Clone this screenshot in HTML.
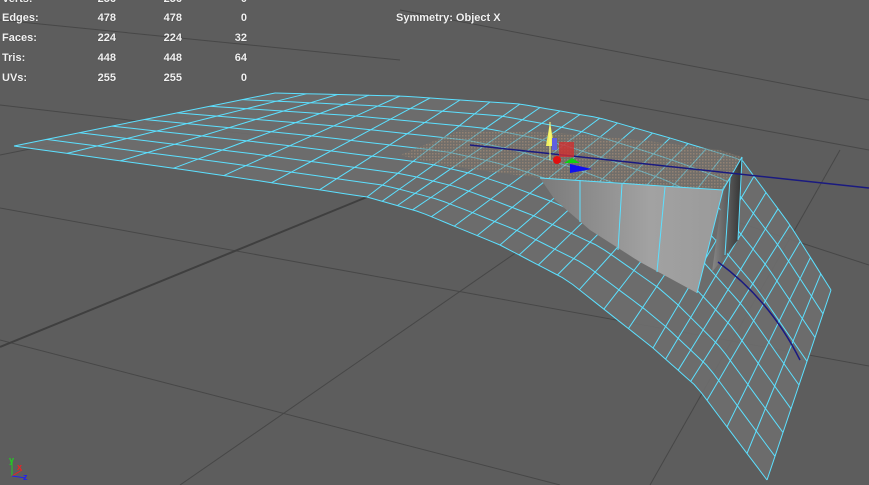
<!DOCTYPE html>
<html><head><meta charset="utf-8"><style>
html,body{margin:0;padding:0;background:#5d5d5d;width:869px;height:485px;overflow:hidden}
svg{position:absolute;left:0;top:0}
.t{position:absolute;color:#f2f2f2;font:bold 11px "Liberation Sans",sans-serif;text-shadow:0 0 1px #333}
.r{text-align:right;width:40px}
</style></head><body>
<svg id="s" width="869" height="485" viewBox="0 0 869 485">
<defs>
<linearGradient id="bx" x1="0" y1="0" x2="1" y2="0">
<stop offset="0" stop-color="#7a7a7a"/><stop offset="0.6" stop-color="#a2a2a2"/><stop offset="1" stop-color="#9a9a9a"/></linearGradient>
<linearGradient id="sd" x1="0" y1="0" x2="1" y2="0">
<stop offset="0" stop-color="#888"/><stop offset="1" stop-color="#333"/></linearGradient>
<pattern id="dt" width="3" height="3" patternUnits="userSpaceOnUse"><rect width="3" height="3" fill="#757068"/><rect width="1.5" height="1.5" fill="#b8957a"/></pattern>
</defs>
<g stroke="#474747" stroke-width="1" fill="none">
<line x1="0" y1="208" x2="869" y2="366"/>
<line x1="0" y1="340" x2="560" y2="485"/>
<line x1="180" y1="485" x2="650" y2="160"/>
<line x1="0" y1="105" x2="300" y2="140"/>
<line x1="0" y1="155" x2="300" y2="95"/>
<line x1="400" y1="10" x2="869" y2="100"/>
<line x1="600" y1="100" x2="869" y2="150"/>
<line x1="700" y1="210" x2="869" y2="265"/>
<line x1="840" y1="150" x2="650" y2="485"/>
<line x1="0" y1="20" x2="400" y2="60"/>
</g>
<line x1="0" y1="347" x2="367" y2="197" stroke="#3f3f3f" stroke-width="2"/>
<g id="mesh"></g>
<polygon points="460,130 560,133 640,140 720,150 742,157 723,190 620,185 540,178 440,165 400,155" fill="url(#dt)" opacity="0.5"/>
<polygon points="540,178 723,190 697,293 640,262 590,230 555,200" fill="url(#bx)"/>
<polygon points="723,190 742,157 738,240 712,272" fill="url(#sd)"/>
<g stroke="#5ce0ff" stroke-width="1" fill="none">
<polyline points="540,178 723,190 742,157"/>
<line x1="723" y1="190" x2="697" y2="293"/>
<line x1="742" y1="157" x2="738" y2="240"/>
<line x1="580" y1="180" x2="580" y2="222"/>
<line x1="622" y1="184" x2="618" y2="250"/>
<line x1="665" y1="187" x2="657" y2="272"/>
<line x1="730" y1="178" x2="725" y2="255"/>
</g>
<line x1="470" y1="145" x2="869" y2="188" stroke="#1a1a80" stroke-width="1.5"/>
<path d="M718 262 Q770 300 800 360" stroke="#1a1a80" stroke-width="1.5" fill="none"/>
<polygon points="550,122 546,146 554,146" fill="#f0f060"/>
<line x1="550" y1="122" x2="550" y2="160" stroke="#ffff80"/>
<rect x="559" y="142" width="15" height="15" fill="#d03030" opacity="0.8"/>
<rect x="552" y="138" width="5" height="12" fill="#6060e0"/>
<circle cx="557" cy="160" r="4" fill="#e01010"/>
<polygon points="564,163 580,163 572,158" fill="#10d010"/>
<polygon points="570,164 570,173 592,169" fill="#1010ee"/>
<g font-family="Liberation Sans,sans-serif" font-size="9" font-weight="bold">
<line x1="12" y1="476" x2="12" y2="460" stroke="#2c2"/>
<line x1="12" y1="476" x2="22" y2="470" stroke="#e22"/>
<line x1="12" y1="476" x2="26" y2="478" stroke="#22e"/>
<text x="9" y="463" fill="#2c2">y</text><text x="17" y="470" fill="#e22">x</text><text x="23" y="480" fill="#22e">z</text>
</g>
</svg>
<div class="t" style="left:2px;top:-7px">Verts:</div><div class="t r" style="left:76px;top:-7px">256</div><div class="t r" style="left:142px;top:-7px">256</div><div class="t r" style="left:207px;top:-7px">0</div>
<div class="t" style="left:2px;top:12px">Edges:</div><div class="t r" style="left:76px;top:12px">478</div><div class="t r" style="left:142px;top:12px">478</div><div class="t r" style="left:207px;top:12px">0</div>
<div class="t" style="left:2px;top:32px">Faces:</div><div class="t r" style="left:76px;top:32px">224</div><div class="t r" style="left:142px;top:32px">224</div><div class="t r" style="left:207px;top:32px">32</div>
<div class="t" style="left:2px;top:52px">Tris:</div><div class="t r" style="left:76px;top:52px">448</div><div class="t r" style="left:142px;top:52px">448</div><div class="t r" style="left:207px;top:52px">64</div>
<div class="t" style="left:2px;top:72px">UVs:</div><div class="t r" style="left:76px;top:72px">255</div><div class="t r" style="left:142px;top:72px">255</div><div class="t r" style="left:207px;top:72px">0</div>
<div class="t" style="left:396px;top:12px">Symmetry: Object X</div>
<script>
(function(){
function curve(pts){return function(t){var n=pts.length-1,f=t*n,i=Math.min(Math.floor(f),n-1),l=f-i;return [pts[i][0]+(pts[i+1][0]-pts[i][0])*l,pts[i][1]+(pts[i+1][1]-pts[i][1])*l];};}
var front=curve([[14,146],[200,172],[367,197],[420,212],[500,245],[567,280],[653,348],[697,387],[767,480]]);
var back=curve([[275,93],[400,96],[520,104],[600,118],[670,138],[742,160],[790,225],[831,290]]);
var left=curve([[14,146],[275,93]]);
var right=curve([[767,480],[831,290]]);
var A=[14,146],B=[275,93],D=[767,480],C=[831,290];
function P(u,v){var f=front(u),b=back(u),l=left(v),r=right(v);var x=(1-v)*f[0]+v*b[0]+(1-u)*l[0]+u*r[0]-((1-u)*(1-v)*A[0]+u*(1-v)*D[0]+(1-u)*v*B[0]+u*v*C[0]);var y=(1-v)*f[1]+v*b[1]+(1-u)*l[1]+u*r[1]-((1-u)*(1-v)*A[1]+u*(1-v)*D[1]+(1-u)*v*B[1]+u*v*C[1]);return x.toFixed(1)+','+y.toFixed(1);}
var NU=28,NV=8,s='',i,j,pts;
pts=[];for(i=0;i<=40;i++)pts.push(P(i/40,0));for(i=0;i<=40;i++)pts.push(P(1,i/40));for(i=40;i>=0;i--)pts.push(P(i/40,1));
s+='<polygon points="'+pts.join(' ')+'" fill="#6e6e6e" opacity="0.9"/>';
for(j=0;j<=NV;j++){pts=[];for(i=0;i<=60;i++)pts.push(P(i/60,j/NV));s+='<polyline points="'+pts.join(' ')+'" stroke="#5ce0ff" fill="none"/>';}
for(i=0;i<=NU;i++){pts=[];for(j=0;j<=NV;j++)pts.push(P(i/NU,j/NV));s+='<polyline points="'+pts.join(' ')+'" stroke="#5ce0ff" fill="none"/>';}
document.getElementById('mesh').innerHTML=s;
})();
</script>
</body></html>
